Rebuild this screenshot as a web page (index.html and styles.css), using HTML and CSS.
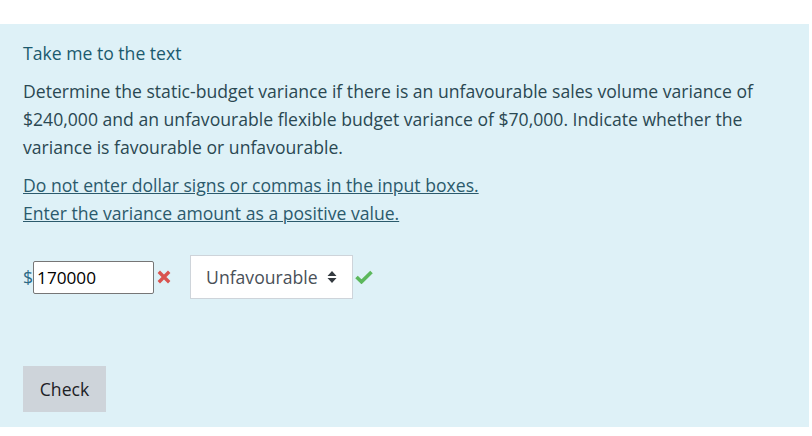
FILE: index.html
```html
<!DOCTYPE html>
<html>
<head>
<meta charset="utf-8">
<link rel="stylesheet" href="styles.css">
</head>
<body>
<div class="formulation">
  <p class="takeme">Take me to the text</p>
  <p class="qtext">Determine the static-budget variance if there is an unfavourable sales volume variance of $240,000 and an unfavourable flexible budget variance of $70,000. Indicate whether the variance is favourable or unfavourable.</p>
  <p class="notes"><a href="#">Do not enter dollar signs or commas in the input boxes.</a><br><a href="#">Enter the variance amount as a positive value.</a></p>
  <div class="answer">
    <span class="dollar">$</span><input class="amount" type="text" value="170000">
    <svg class="icon wrong" viewBox="0 0 14 14" width="14" height="14"><path d="M1.8 1.8 L12.2 12.2 M12.2 1.8 L1.8 12.2" stroke="#d9534f" stroke-width="3.4" stroke-linecap="butt"/></svg>
    <div class="select"><span>Unfavourable</span>
      <svg class="updown" viewBox="0 0 10 14" width="10" height="14"><path d="M5 1 L9.5 6 L0.5 6 Z M5 13 L9.5 8 L0.5 8 Z" fill="#343a40"/></svg>
    </div>
    <svg class="icon right" viewBox="0 0 18 14" width="18" height="14"><path d="M1.5 7 L6.5 11.8 L16.5 2" fill="none" stroke="#5cb85c" stroke-width="3.6"/></svg>
  </div>
  <div class="actions"><button class="check">Check</button></div>
</div>
</body>
</html>
```
FILE: styles.css
```css
html, body { margin: 0; padding: 0; background: #fff; }
body { font-family: "Open Sans", "Noto Sans", sans-serif; }
.formulation {
  margin-top: 24px;
  width: 809px;
  height: 403px;
  box-sizing: border-box;
  background: #def1f7;
  padding: 15px 23px 0 23px;
  color: #2a4852;
  font-size: 17.6px;
  line-height: 28px;
}
p { margin: 0; }
.takeme { color: #1b5a6e; margin-bottom: 10px; }
.qtext { margin-bottom: 10px; }
.notes a { color: #2b5a6c; text-decoration: underline; }
.answer {
  display: flex;
  align-items: center;
  margin-top: 28px;
  height: 44px;
}
.dollar { color: #2b6a86; margin-right: 0; }
.amount {
  width: 121px; height: 33px; box-sizing: border-box;
  border: 1px solid #767676; border-radius: 2px;
  font-family: "Open Sans", sans-serif; font-size: 17.2px; color: #000;
  padding: 0 3px; margin: 0; background: #fff;
}
.wrong { margin-left: 3px; margin-right: 19px; }
.select {
  width: 163px; height: 44px; box-sizing: border-box;
  border: 1px solid #ced4da; background: #fff;
  display: flex; align-items: center; padding-left: 15px;
  color: #495057;
}
.updown { margin-left: 9px; }
.right { margin-left: 2px; }
.actions { margin-top: 67px; }
.check {
  width: 83px; height: 46px; border: 0; background: #ced4da;
  font-family: "Open Sans", sans-serif; font-size: 17.6px; color: #1d2125;
  padding: 0;
}
```
